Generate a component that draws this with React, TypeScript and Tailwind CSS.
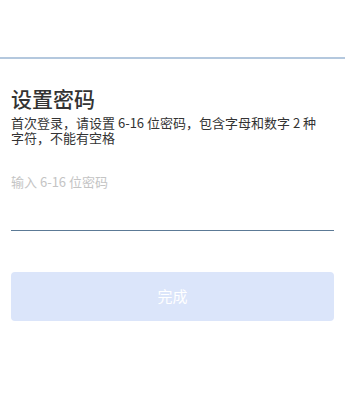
export default function App() {
  return (
    <div className="w-[345px] h-[410px] bg-white flex flex-col" style={{ fontFamily: '"Noto Sans CJK SC", "Noto Sans", sans-serif' }}>
      <div className="h-[59px] bg-white border-b-2 border-[#b4c8de]" />
      <div className="px-[11px] pt-[25px]">
        <div className="text-[21px] font-medium leading-[28px] text-[#333]">设置密码</div>
        <div className="mt-[3px] pr-[14px] text-[13px] leading-[15px] text-[#333]">首次登录，请设置 6-16 位密码，包含字母和数字 2 种字符，不能有空格</div>
        <div className="mt-[26px] border-b border-[#5c7a96] h-[60px] pr-[1px]">
          <div className="text-[13px] leading-[22px] text-[#c4c4c4]">输入 6-16 位密码</div>
        </div>
        <div className="mt-[41px] h-[49px] rounded-[4px] bg-[#dbe5fa] flex items-center justify-center text-white text-[15px]">完成</div>
      </div>
    </div>
  );
}
